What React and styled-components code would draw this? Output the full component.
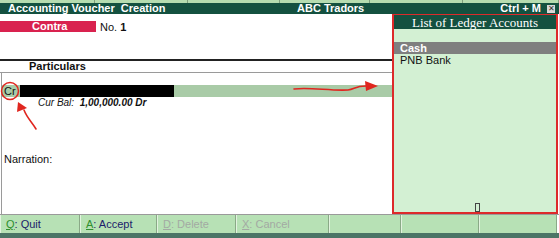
import React from "react";
import styled, { createGlobalStyle } from "styled-components";

const Global = createGlobalStyle`
  html, body { margin: 0; padding: 0; background: #ffffff; }
  body { font-family: "Liberation Sans", Arial, sans-serif; }
`;

const Page = styled.div`
  position: relative;
  width: 559px;
  height: 238px;
  overflow: hidden;
  background: #ffffff;
  display: flex;
  flex-direction: column;
  font-family: "Liberation Sans", Arial, sans-serif;
`;

const TopStrip = styled.div`
  height: 3px;
  display: flex;
  background: #b6dcb0;
`;

const StripCell = styled.div`
  width: ${(p) => p.$w}px;
  border-right: 1px solid #7e9e7c;
  box-sizing: border-box;
`;

const TitleBar = styled.div`
  height: 11px;
  background: #145140;
  display: flex;
  align-items: center;
  color: #ffffff;
  font-weight: bold;
  font-size: 11px;
  line-height: 11px;
`;

const TitleLeft = styled.span`
  width: 289px;
  padding-left: 8px;
  white-space: pre;
`;

const TitleCenter = styled.span`
  flex: 1;
`;

const TitleRight = styled.span`
  margin-right: 6px;
`;

const CloseBox = styled.span`
  width: 8px;
  height: 8px;
  margin-right: 4px;
  background: #d8d8d8;
  color: #333;
  font-size: 8px;
  line-height: 8px;
  text-align: center;
  font-weight: normal;
`;

const Body = styled.div`
  display: flex;
  height: 200px;
`;

const Main = styled.div`
  width: 392px;
  display: flex;
  flex-direction: column;
`;

const VoucherRow = styled.div`
  display: flex;
  align-items: center;
  margin-top: 7px;
  height: 11px;
  font-size: 11px;
`;

const TypeBadge = styled.div`
  width: 96px;
  height: 11px;
  background: #d9224f;
  color: #ffffff;
  font-weight: bold;
  font-size: 11px;
  line-height: 11px;
  padding-left: 32px;
  box-sizing: border-box;
`;

const VoucherNo = styled.div`
  margin-left: 4px;
  color: #111;
  b { font-weight: bold; }
`;

const ColumnHead = styled.div`
  margin-top: 27px;
  border-top: 2px solid #222;
  border-bottom: 1px solid #9a9a9a;
  height: 11px;
  font-size: 11px;
  line-height: 11px;
  font-weight: bold;
  padding-left: 29px;
  color: #111;
`;

const Entries = styled.div`
  flex: 1;
  border-left: 1px solid #9a9a9a;
  margin-left: 1px;
  display: flex;
  flex-direction: column;
`;

const EntryRow = styled.div`
  margin-top: 12px;
  height: 12px;
  display: flex;
  align-items: stretch;
  background: #a9cba7;
`;

const DrCr = styled.div`
  width: 18px;
  padding-left: 2px;
  box-sizing: border-box;
  font-size: 11px;
  line-height: 12px;
  color: #111;
`;

const LedgerInput = styled.div`
  width: 154px;
  background: #000000;
`;

const Balance = styled.div`
  margin-top: 1px;
  padding-left: 36px;
  font-size: 10px;
  line-height: 10px;
  font-style: italic;
  color: #111;
  white-space: pre;
  b { font-weight: bold; }
`;

const Narration = styled.div`
  margin-top: 46px;
  padding-left: 2px;
  font-size: 11px;
  line-height: 11px;
  color: #111;
`;

const Panel = styled.div`
  width: 166px;
  box-sizing: border-box;
  border: 2px solid #dd2a2a;
  border-top-width: 1px;
  background: #d3f0d3;
  display: flex;
  flex-direction: column;
  position: relative;
`;

const PanelHead = styled.div`
  height: 14px;
  background: #145140;
  color: #ffffff;
  font-family: "Liberation Serif", "Times New Roman", serif;
  font-size: 13px;
  line-height: 15px;
  text-align: center;
`;

const LedgerItem = styled.div`
  height: 12px;
  line-height: 12px;
  font-size: 11px;
  padding-left: 6px;
  margin-top: ${(p) => (p.$first ? "13px" : "0")};
  background: ${(p) => (p.$active ? "#7f7f7f" : "transparent")};
  color: ${(p) => (p.$active ? "#ffffff" : "#111")};
  font-weight: ${(p) => (p.$active ? "bold" : "normal")};
`;

const Caret = styled.div`
  position: absolute;
  left: 81px;
  bottom: 0;
  width: 3px;
  height: 7px;
  border: 1px solid #444;
`;

const ButtonBar = styled.div`
  height: 18px;
  border-top: 1px solid #9a9a9a;
  display: flex;
  background: #ffffff;
`;

const KeyButton = styled.div`
  width: ${(p) => p.$w}px;
  box-sizing: border-box;
  background: #b7e1b5;
  border-left: 1px solid #e2f3df;
  border-right: 1px solid #8aa987;
  font-size: 11px;
  line-height: 18px;
  padding-left: 5px;
  color: ${(p) => (p.$disabled ? "#a3a9a3" : "#1c1c6b")};
  u {
    color: ${(p) => (p.$disabled ? "#a3a9a3" : "#2f8f2f")};
  }
`;

const Footer = styled.div`
  flex: 1;
  background: #4b7566;
`;

const Annotations = styled.svg`
  position: absolute;
  left: 0;
  top: 0;
  pointer-events: none;
`;

export default function App() {
  const strip = [95, 93, 92, 90, 93, 96];
  const buttons = [
    { w: 80, k: "Q", t: ": Quit" },
    { w: 77, k: "A", t: ": Accept" },
    { w: 79, k: "D", t: ": Delete", d: true },
    { w: 93, k: "X", t: ": Cancel", d: true },
    { w: 72 },
    { w: 78 },
    { w: 78 },
  ];
  return (
    <>
      <Global />
      <Page>
        <TopStrip>
          {strip.map((w, i) => (
            <StripCell key={i} $w={w} />
          ))}
        </TopStrip>
        <TitleBar>
          <TitleLeft>{"Accounting Voucher  Creation"}</TitleLeft>
          <TitleCenter>ABC Tradors</TitleCenter>
          <TitleRight>Ctrl + M</TitleRight>
          <CloseBox>✕</CloseBox>
        </TitleBar>
        <Body>
          <Main>
            <VoucherRow>
              <TypeBadge>Contra</TypeBadge>
              <VoucherNo>
                No. <b>1</b>
              </VoucherNo>
            </VoucherRow>
            <ColumnHead>Particulars</ColumnHead>
            <Entries>
              <EntryRow>
                <DrCr>Cr</DrCr>
                <LedgerInput />
              </EntryRow>
              <Balance>
                {"Cur Bal:  "}
                <b>1,00,000.00 Dr</b>
              </Balance>
              <Narration>Narration:</Narration>
            </Entries>
          </Main>
          <Panel>
            <PanelHead>List of Ledger Accounts</PanelHead>
            <LedgerItem $first $active>
              Cash
            </LedgerItem>
            <LedgerItem>PNB Bank</LedgerItem>
            <Caret />
          </Panel>
        </Body>
        <ButtonBar>
          {buttons.map((b, i) => (
            <KeyButton key={i} $w={b.w} $disabled={b.d}>
              {b.k && (
                <>
                  <u>{b.k}</u>
                  {b.t}
                </>
              )}
            </KeyButton>
          ))}
        </ButtonBar>
        <Footer />
        <Annotations width="559" height="238" viewBox="0 0 559 238">
          <circle cx="10" cy="91" r="8.5" fill="none" stroke="#e0261f" strokeWidth="1.5" />
          <path
            d="M36 129 C 32 122, 27 118, 24 110"
            fill="none"
            stroke="#e0261f"
            strokeWidth="1.6"
            strokeLinecap="round"
          />
          <polygon points="18,102 17,112 27,108" fill="#e0261f" />
          <path
            d="M294 89 C 310 87, 330 91, 348 90 C 355 89, 355 86, 366 86"
            fill="none"
            stroke="#e0261f"
            strokeWidth="1.6"
            strokeLinecap="round"
          />
          <polygon points="365,81 378,86 366,91" fill="#e0261f" />
        </Annotations>
      </Page>
    </>
  );
}
